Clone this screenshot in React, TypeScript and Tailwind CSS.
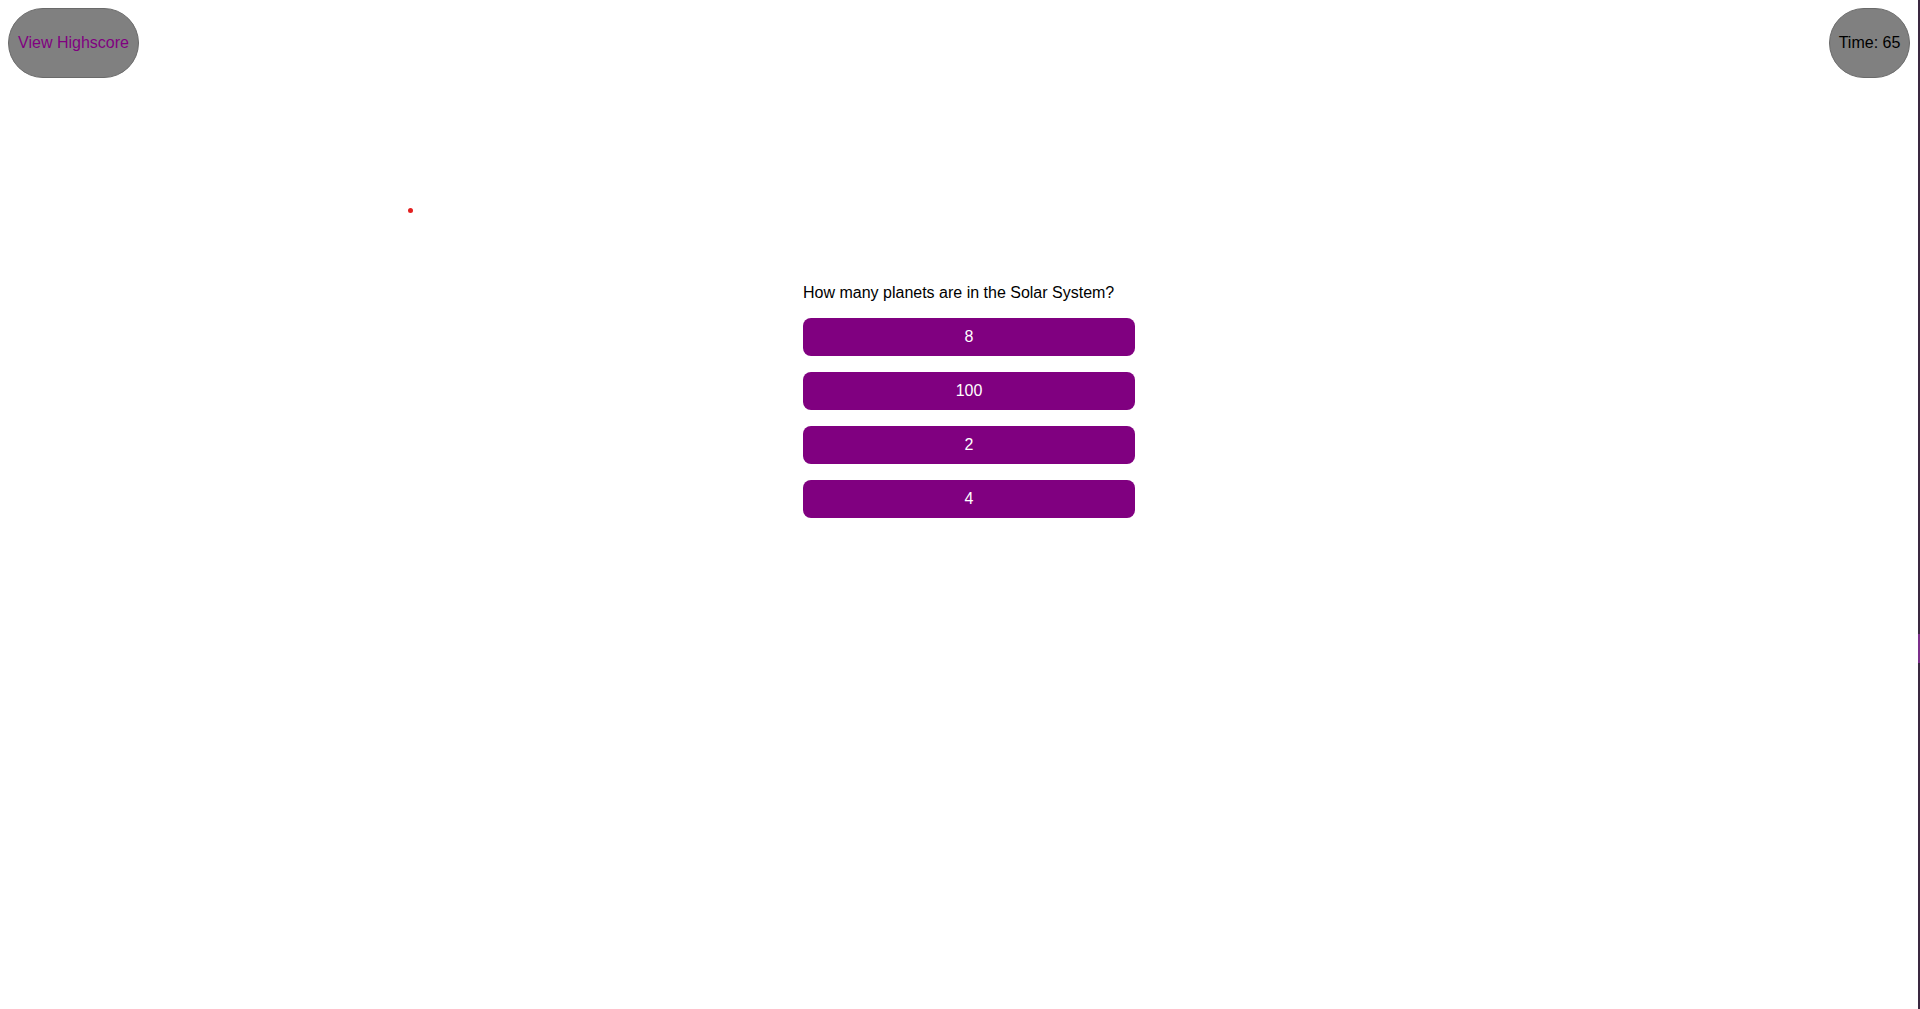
export default function App() {
  const answers = ['8', '100', '2', '4'];

  return (
    <div className="flex h-[1009px] w-[1920px] bg-white font-['Liberation_Sans',Arial,sans-serif] text-[16px] overflow-hidden">
      <div className="relative flex-1 flex flex-col">
        {/* Top bar */}
        <header className="flex items-start justify-between pl-2 pr-2 pt-2">
          <button className="w-[131px] h-[70px] rounded-full bg-[#808080] border border-[#6a6a6a] text-[#800080] leading-none">
            View Highscore
          </button>
          <div className="w-[81px] h-[70px] rounded-full bg-[#808080] border border-[#6a6a6a] text-black flex items-center justify-center leading-none">
            Time: 65
          </div>
        </header>

        {/* stray dot */}
        <span className="absolute left-[408px] top-[208px] w-[5px] h-[5px] rounded-full bg-[#e32020]" />

        {/* Quiz */}
        <main className="pl-[803px] pt-[206px]">
          <div className="w-[332px] flex flex-col">
            <p className="h-[18px] leading-[18px] text-black">How many planets are in the Solar System?</p>
            <div className="mt-4 flex flex-col gap-4">
              {answers.map((a) => (
                <button
                  key={a}
                  className="h-[38px] w-full rounded-[8px] bg-[#800080] text-white leading-none"
                >
                  {a}
                </button>
              ))}
            </div>
          </div>
        </main>
      </div>

      {/* right window edge */}
      <div className="w-[2px] flex flex-col bg-[#3a2840]">
        <div className="h-[634px]" />
        <div className="h-[29px] bg-[#7b2f8a]" />
      </div>
    </div>
  );
}
